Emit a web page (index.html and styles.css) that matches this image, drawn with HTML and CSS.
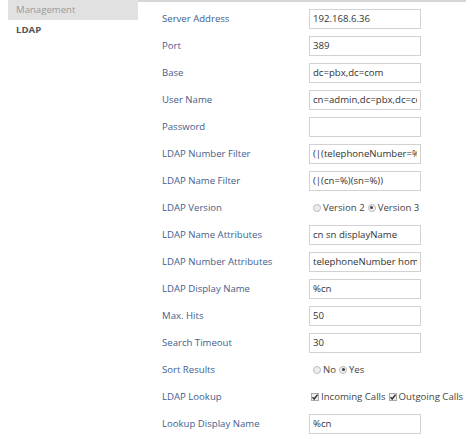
FILE: index.html
```html
<!DOCTYPE html>
<html>
<head>
<meta charset="utf-8">
<link rel="stylesheet" href="styles.css">
</head>
<body>
<div class="page">
  <aside class="sidebar">
    <div class="side-head">Management</div>
    <div class="side-item">LDAP</div>
  </aside>
  <main class="main">
    <div class="row"><span class="label">Server Address</span><input class="field" type="text" value="192.168.6.36"></div>
    <div class="row"><span class="label">Port</span><input class="field" type="text" value="389"></div>
    <div class="row"><span class="label">Base</span><input class="field" type="text" value="dc=pbx,dc=com"></div>
    <div class="row"><span class="label">User Name</span><input class="field" type="text" value="cn=admin,dc=pbx,dc=com"></div>
    <div class="row"><span class="label">Password</span><input class="field" type="password" value=""></div>
    <div class="row"><span class="label">LDAP Number Filter</span><input class="field" type="text" value="(|(telephoneNumber=%)(mobile=%))"></div>
    <div class="row"><span class="label">LDAP Name Filter</span><input class="field" type="text" value="(|(cn=%)(sn=%))"></div>
    <div class="row"><span class="label">LDAP Version</span>
      <span class="opts"><span class="radio"></span><span class="opt">Version 2</span><span class="radio on"></span><span class="opt">Version 3</span></span></div>
    <div class="row"><span class="label">LDAP Name Attributes</span><input class="field" type="text" value="cn sn displayName"></div>
    <div class="row"><span class="label">LDAP Number Attributes</span><input class="field" type="text" value="telephoneNumber homePhone"></div>
    <div class="row"><span class="label">LDAP Display Name</span><input class="field" type="text" value="%cn"></div>
    <div class="row"><span class="label">Max. Hits</span><input class="field" type="text" value="50"></div>
    <div class="row"><span class="label">Search Timeout</span><input class="field" type="text" value="30"></div>
    <div class="row"><span class="label">Sort Results</span>
      <span class="opts"><span class="radio"></span><span class="opt">No</span><span class="radio on"></span><span class="opt">Yes</span></span></div>
    <div class="row"><span class="label">LDAP Lookup</span>
      <span class="opts chk"><span class="check"><svg viewBox="0 0 8 8" width="8" height="8"><path d="M1.5 4.2 L3.2 6 L6.6 1.6" fill="none" stroke="#333" stroke-width="1.5"/></svg></span><span class="opt">Incoming Calls</span><span class="check"><svg viewBox="0 0 8 8" width="8" height="8"><path d="M1.5 4.2 L3.2 6 L6.6 1.6" fill="none" stroke="#333" stroke-width="1.5"/></svg></span><span class="opt">Outgoing Calls</span></span></div>
    <div class="row"><span class="label">Lookup Display Name</span><input class="field" type="text" value="%cn"></div>
  </main>
</div>
</body>
</html>
```

FILE: styles.css
```css
html, body {
  margin: 0;
  padding: 0;
  background: #fff;
}
body {
  font-family: "Open Sans", "Noto Sans", sans-serif;
  font-size: 9.6px;
  width: 474px;
  height: 439px;
  overflow: hidden;
}
.page {
  display: flex;
  align-items: flex-start;
}
.sidebar {
  width: 130px;
  margin-left: 8px;
  flex: none;
}
.side-head {
  background: #e1e1e1;
  color: #9a9a9a;
  height: 20px;
  line-height: 20px;
  padding-left: 8px;
  box-sizing: border-box;
}
.side-item {
  color: #555;
  font-weight: bold;
  padding-left: 8px;
  height: 20px;
  line-height: 20px;
}
.main {
  flex: 1;
  border-top: 2px solid #d6d6d6;
  padding: 3px 0 0 24px;
  margin-right: 54px;
}
.row {
  display: flex;
  align-items: center;
  height: 27px;
}
.label {
  width: 147px;
  flex: none;
  color: #45608c;
}
.field {
  width: 112px;
  height: 20px;
  box-sizing: border-box;
  border: 1px solid #d2d2d2;
  border-radius: 0;
  background: #fff;
  color: #333;
  padding: 0 3px;
  margin: 0;
  font-family: "Open Sans", "Noto Sans", sans-serif;
  font-size: 9.6px;
  outline: none;
  flex: none;
}
.opts {
  display: flex;
  align-items: center;
  white-space: nowrap;
  color: #444;
  padding-left: 4px;
}
.opts.chk {
  padding-left: 2px;
}
.opt {
  margin-right: 3px;
}
.radio {
  width: 8px;
  height: 8px;
  box-sizing: border-box;
  border-radius: 50%;
  border: 1px solid #bdbdbd;
  background: #ededed;
  margin-right: 2px;
  position: relative;
}
.radio.on::after {
  content: "";
  position: absolute;
  left: 1.5px;
  top: 1.5px;
  width: 3px;
  height: 3px;
  border-radius: 50%;
  background: #444;
}
.check {
  width: 8px;
  height: 8px;
  box-sizing: border-box;
  border: 1px solid #aaa;
  background: #eee;
  margin-right: 2px;
  display: flex;
  align-items: center;
  justify-content: center;
  overflow: hidden;
}
.check svg {
  display: block;
  flex: none;
}
```
